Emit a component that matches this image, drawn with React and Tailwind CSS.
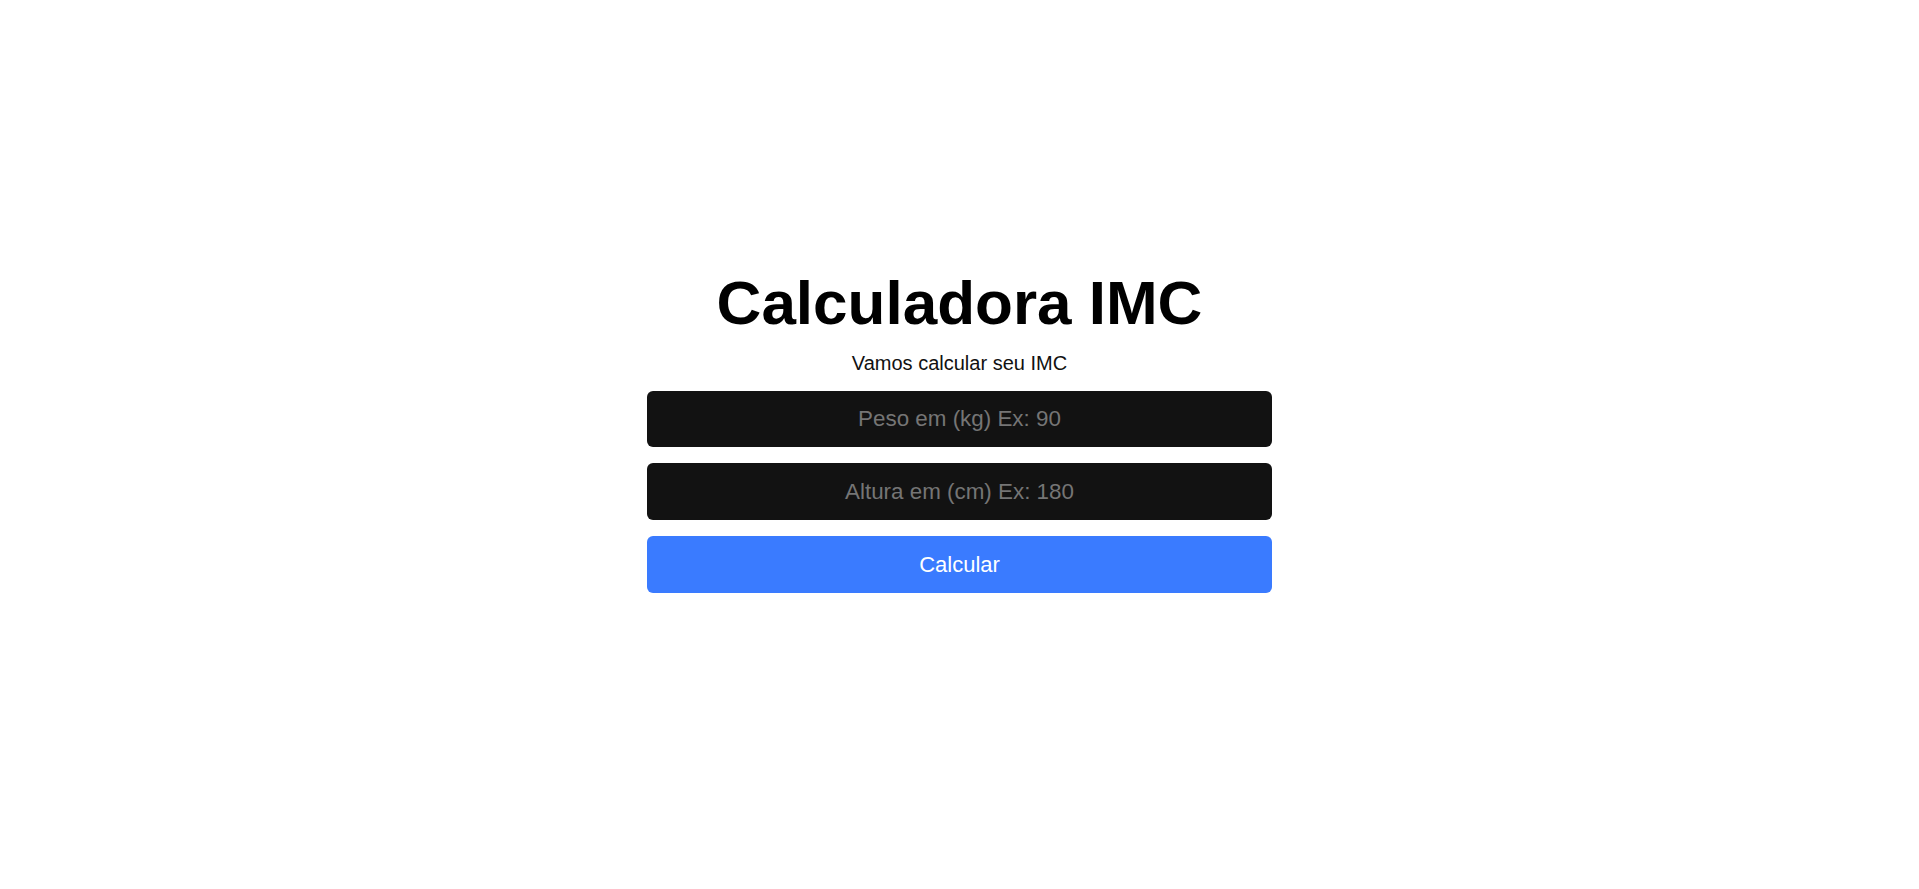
import React, { useState } from 'react';

const App = () => {
  const [peso, setPeso] = useState('');
  const [altura, setAltura] = useState('');

  return (
    <div
      className="min-h-screen bg-white flex flex-col items-center pt-[272px]"
      style={{ fontFamily: '"Liberation Sans", Arial, sans-serif' }}
    >
      <h1 className="text-[62px] leading-none font-bold text-black">Calculadora IMC</h1>
      <p className="mt-[15px] text-xl leading-7 text-[#111]">Vamos calcular seu IMC</p>

      <div className="mt-[14px] w-[625px] flex flex-col gap-4">
        <input
          type="text"
          inputMode="decimal"
          value={peso}
          onChange={(e) => setPeso(e.target.value)}
          placeholder="Peso em (kg) Ex: 90"
          className="h-14 w-full rounded-md bg-[#121212] text-center text-[22.4px] text-white placeholder:text-[#757575] outline-none"
        />
        <input
          type="text"
          inputMode="decimal"
          value={altura}
          onChange={(e) => setAltura(e.target.value)}
          placeholder="Altura em (cm) Ex: 180"
          className="h-[57px] w-full rounded-md bg-[#121212] text-center text-[22.4px] text-white placeholder:text-[#757575] outline-none"
        />
        <button className="h-[57px] w-full rounded-md bg-[#3a7bff] text-[22px] text-white cursor-pointer">
          Calcular
        </button>
      </div>
    </div>
  );
};

export default App;
